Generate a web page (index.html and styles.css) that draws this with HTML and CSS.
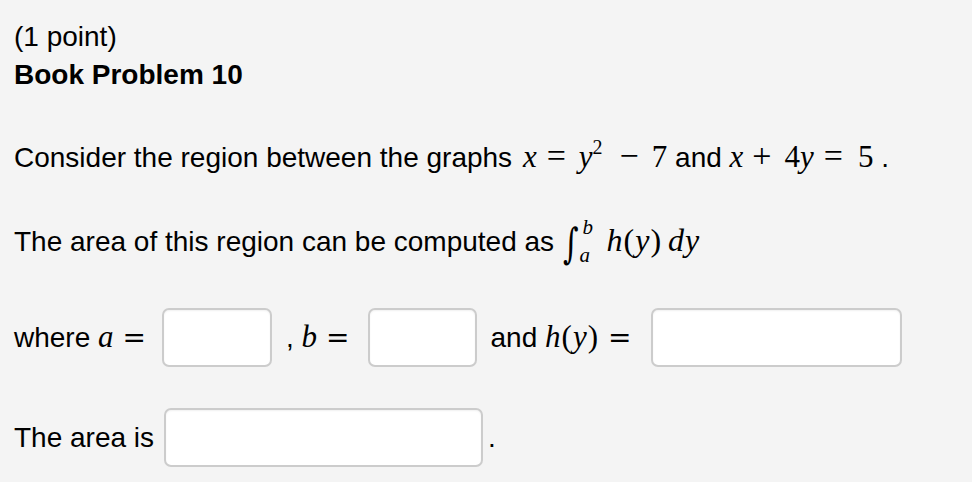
FILE: index.html
```html
<!DOCTYPE html>
<html>
<head>
<meta charset="utf-8">
<link rel="stylesheet" href="styles.css">
</head>
<body>
<div class="page">
  <div class="line points">(1 point)</div>
  <div class="line title">Book Problem 10</div>
  <p class="line q1">Consider the region between the graphs <span class="m eq1"><i class="v x1">x</i><span class="o eqs">=</span><i class="v ysq">y</i><sup>2</sup><span class="o minus">−</span><span class="seven">7</span></span> and <span class="m eq2"><i class="v">x</i><span class="o plus">+</span><span class="four">4</span><i class="v">y</i><span class="o eqs2">=</span><span class="five">5</span></span> .</p>
  <p class="line q2">The area of this region can be computed as <span class="m integral"><span class="int">∫</span><span class="lims"><i class="up">b</i><i class="lo">a</i></span><span class="fn"><i>h</i>(<i>y</i>)</span><span class="thin"></span><span class="fn"><i>d</i><i>y</i></span></span></p>
  <div class="row r1">
    <span class="lbl">where <span class="m rm"><i class="v">a</i><span class="req">=</span></span></span>
    <span class="box b1"></span>
    <span class="lbl comma">, <span class="m rm"><i class="v">b</i><span class="req">=</span></span></span>
    <span class="box b2"></span>
    <span class="lbl and">and <span class="m rm"><span class="fn"><i>h</i>(<i>y</i>)</span><span class="req">=</span></span></span>
    <span class="box b3"></span>
  </div>
  <div class="row r2">
    <span class="lbl">The area is</span>
    <span class="box b4"></span>
    <span class="lbl dot">.</span>
  </div>
</div>
</body>
</html>
```
FILE: styles.css
```css
html, body {
  margin: 0;
  padding: 0;
  background: #f4f4f4;
}
.page {
  font-family: "Liberation Sans", Arial, sans-serif;
  font-size: 28px;
  color: #000;
  padding: 21px 14px 0 14px;
}
.line {
  margin: 0;
  height: 32px;
  line-height: 32px;
  white-space: nowrap;
}
.title {
  font-weight: bold;
  margin-top: 6px;
}
.q1 {
  margin-top: 51px;
}
.q2 {
  margin-top: 52px;
}
.m {
  font-family: "Liberation Serif", "Times New Roman", serif;
  font-size: 31px;
  line-height: 0;
}
.m i {
  font-style: italic;
}
.o {
  font-size: 34px;
}
.eq1 {
  margin-left: 3px;
}
.eqs {
  margin-left: 10px;
}
.ysq {
  margin-left: 13px;
}
.m sup {
  font-size: 20px;
  vertical-align: 13px;
  line-height: 0;
  margin-left: 0;
}
.minus {
  margin-left: 17px;
}
.seven {
  margin-left: 13px;
}
.plus {
  margin-left: 9px;
}
.four {
  margin-left: 13px;
}
.eqs2 {
  margin-left: 10px;
}
.five {
  margin-left: 15px;
}
.integral {
  font-size: 32px;
  margin-left: 1px;
}
.int {
  display: inline-block;
  font-family: "DejaVu Serif", serif;
  font-size: 30px;
  line-height: 0;
  transform: scaleY(1.4) translateY(2px);
}
.lims {
  display: inline-block;
  position: relative;
  width: 16px;
  height: 10px;
  margin-right: 12px;
  font-size: 21px;
}
.lims .up {
  position: absolute;
  left: 4px;
  top: -24px;
  line-height: 1;
}
.lims .lo {
  position: absolute;
  left: 1px;
  top: 4px;
  line-height: 1;
}
.fn {
  letter-spacing: 1px;
}
.thin {
  display: inline-block;
  width: 6px;
}
.row {
  display: flex;
  align-items: center;
  white-space: nowrap;
}
.lbl {
  line-height: 32px;
}
.r1 {
  margin-top: 50px;
}
.r2 {
  margin-top: 41px;
}
.rm {
  font-size: 31px;
}
.req {
  font-family: "DejaVu Serif", serif;
  font-style: normal;
  font-size: 28px;
  margin-left: 9px;
}
.box {
  display: block;
  height: 55px;
  background: #fff;
  border: 2px solid #cccccc;
  border-radius: 7px;
  box-shadow: inset 0 1px 2px rgba(0,0,0,0.06);
}
.b1 {
  width: 106px;
  margin-left: 16px;
}
.comma {
  margin-left: 14px;
}
.b2 {
  width: 105px;
  margin-left: 18px;
}
.and {
  margin-left: 14px;
}
.b3 {
  width: 247px;
  margin-left: 20px;
}
.b4 {
  width: 315px;
  margin-left: 10px;
}
.dot {
  margin-left: 5px;
}
```
